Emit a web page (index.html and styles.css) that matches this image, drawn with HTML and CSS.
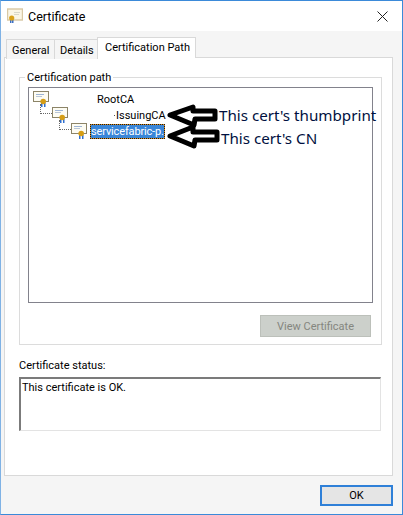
FILE: index.html
```html
<!DOCTYPE html>
<html lang="en">
<head>
  <meta charset="UTF-8">
  <title>Certificate</title>
  <link rel="stylesheet" href="styles.css">
</head>
<body>
  <div class="dialog">
    <div class="titlebar">
      <svg class="title-icon" width="16" height="16" viewBox="0 0 16 16">
        <rect x="0.5" y="1" width="15" height="11" fill="#fbf6e6" stroke="#d8c8a4" stroke-width="1.4"/>
        <rect x="7" y="4" width="6" height="1" fill="#d8d8cc"/>
        <rect x="7" y="6" width="5" height="1" fill="#d8d8cc"/>
        <path d="M3 12h1.5v3H3zM5 12h1.5v3H5z" fill="#3b6fc4"/>
        <circle cx="4.7" cy="10" r="2.6" fill="#d9a21b"/>
      </svg>
      <span class="title-text">Certificate</span>
      <svg class="close-icon" width="11" height="11" viewBox="0 0 11 11">
        <path d="M0.5 0.5L10.5 10.5M10.5 0.5L0.5 10.5" stroke="#222" fill="none"/>
      </svg>
    </div>

    <div class="content">
      <div class="tabs">
        <div class="tab">General</div>
        <div class="tab tab-details">Details</div>
        <div class="tab tab-active">Certification Path</div>
      </div>

      <div class="panel">
        <fieldset class="group">
          <legend>Certification path</legend>
          <div class="tree">
            <div class="node node-root">
              <svg class="cert"><use href="#cert"/></svg>
              <span class="node-label label-root">RootCA</span>
            </div>
            <div class="node node-issuing">
              <span class="elbow"></span>
              <svg class="cert"><use href="#cert"/></svg>
              <span class="tick"></span>
              <span class="node-label label-issuing">IssuingCA</span>
            </div>
            <div class="node node-leaf">
              <span class="elbow"></span>
              <svg class="cert"><use href="#cert"/></svg>
              <span class="node-label label-selected">servicefabric-p.</span>
            </div>
          </div>
          <div class="group-actions">
            <button type="button" class="btn-view" disabled>View Certificate</button>
          </div>
        </fieldset>

        <div class="status-label">Certificate status:</div>
        <div class="status-box">This certificate is OK.</div>
      </div>

      <div class="footer">
        <button type="button" class="btn-ok">OK</button>
      </div>
    </div>

    <!-- hand drawn arrows and notes pasted over the dialog -->
    <svg class="arrows" width="70" height="55" viewBox="0 0 70 55">
      <path d="M10 17L33 9L33 13L55 13L55 21L35 21L34 27Z" fill="#fff" stroke="#000" stroke-width="5" stroke-linejoin="round"/>
      <path d="M10 38L33 29L33 34L57 34L57 42L35 42L34 48Z" fill="#fff" stroke="#000" stroke-width="5" stroke-linejoin="round"/>
    </svg>
    <div class="note note-thumb">This cert's thumbprint</div>
    <div class="note note-cn">This cert's CN</div>
  </div>

  <svg width="0" height="0" class="defs">
    <symbol id="cert" viewBox="0 0 16 16">
      <rect x="0.5" y="0.5" width="15" height="10" fill="#fdfcf3" stroke="#8c8468"/>
      <rect x="3" y="3" width="8" height="1" fill="#9db4d6"/>
      <rect x="3" y="5" width="6" height="1" fill="#b9c6d8"/>
      <path d="M8 12h1.5v4H8zM11 12h1.5v4H11z" fill="#2f6fd0"/>
      <circle cx="10.2" cy="10.5" r="2.8" fill="#d69e16"/>
    </symbol>
  </svg>
</body>
</html>
```

FILE: styles.css
```css
* {
  box-sizing: border-box;
}

html, body {
  margin: 0;
  height: 100%;
}

body {
  font-family: Roboto, "Noto Sans", sans-serif;
  font-size: 11px;
  color: #000;
  background-color: #fff;
}

.defs {
  position: absolute;
}

.dialog {
  position: relative;
  width: 403px;
  height: 515px;
  display: flex;
  flex-direction: column;
  border: 1px solid #3b8ad9;
  border-left-color: #7fb2e5;
}

.titlebar {
  height: 30px;
  flex: none;
  display: flex;
  align-items: center;
  padding: 0 14px 0 6px;
  background-color: #fff;
}

.title-text {
  margin-left: 5px;
  flex: 1;
  font-size: 12.5px;
}

.content {
  flex: 1;
  display: flex;
  flex-direction: column;
  padding: 6px 9px 7px 3px;
  background-color: #f5f5f5;
}

.tabs {
  display: flex;
  align-items: flex-end;
  height: 21px;
  padding-left: 2px;
  margin-bottom: -1px;
}

.tab {
  height: 20px;
  padding: 3px 5px 0;
  line-height: 15px;
  white-space: nowrap;
  background-color: #f5f5f5;
  border: 1px solid #d9d9d9;
  border-bottom: none;
  margin-right: -1px;
  position: relative;
  top: 1px;
  width: 49px;
}

.tab-details {
  width: 44px;
}

.tab-active {
  width: 99px;
  height: 21px;
  padding: 2px 0 0 7px;
  background-color: #fff;
  top: 0;
  z-index: 1;
}

.panel {
  height: 419px;
  padding: 12px 10px 0 14px;
  background-color: #fff;
  border: 1px solid #d9d9d9;
}

.group {
  margin: 0;
  height: 275px;
  padding: 2px 8px 0 8px;
  border: 1px solid #dcdcdc;
}

.group legend {
  padding: 0 2px;
  margin-left: -3px;
  line-height: 15px;
}

.tree {
  position: relative;
  height: 216px;
  border: 1px solid #82828c;
  background-color: #fff;
}

.node {
  position: absolute;
  display: flex;
  align-items: center;
  height: 16px;
}

.node-root {
  left: 4px;
  top: 3px;
}

.node-issuing {
  left: 23px;
  top: 19px;
}

.node-leaf {
  left: 42px;
  top: 35px;
}

.cert {
  width: 16px;
  height: 16px;
  flex: none;
}

.elbow {
  position: absolute;
  left: -12px;
  top: -3px;
  width: 12px;
  height: 10px;
  border-left: 1px dotted #666;
  border-bottom: 1px dotted #666;
}

.node-label {
  line-height: 15px;
  white-space: nowrap;
}

.label-root {
  margin-left: 48px;
}

.tick {
  width: 1px;
  height: 1px;
  margin-left: 46px;
  background-color: #555;
}

.label-issuing {
  margin-left: 1px;
}

.label-selected {
  margin-left: 3px;
  width: 75px;
  height: 15px;
  line-height: 14px;
  letter-spacing: -0.15px;
  background-color: #3a86d8;
  color: #fff;
  border: 1px solid #d98a1a;
  outline: 1px dotted #1a1a1a;
  outline-offset: -1px;
}

.group-actions {
  display: flex;
  justify-content: flex-end;
  padding: 12px 2px 0 0;
}

.btn-view {
  width: 111px;
  height: 22px;
  padding: 0;
  font: inherit;
  color: #84867f;
  background-color: #ccd0cb;
  border: 1px solid #bcc0ba;
}

.status-label {
  margin-top: 13px;
  line-height: 16px;
}

.status-box {
  width: 362px;
  height: 54px;
  margin-top: 3px;
  padding: 1px 0 0 1px;
  line-height: 15px;
  border: 1px solid #e3e3e3;
  border-top: 2px solid #7b7b7b;
  border-left: 2px solid #7b7b7b;
}

.footer {
  display: flex;
  justify-content: flex-end;
  padding: 9px 0 0;
}

.btn-ok {
  width: 73px;
  height: 21px;
  padding: 0;
  font: inherit;
  background-color: #e5e5e5;
  border: 2px solid #2f80d8;
}

.arrows {
  position: absolute;
  left: 159px;
  top: 97px;
}

.note {
  position: absolute;
  font-family: "Noto Sans", sans-serif;
  font-size: 15.2px;
  line-height: 18px;
  color: #001040;
  white-space: nowrap;
}

.note-thumb {
  left: 218px;
  top: 105px;
}

.note-cn {
  left: 220px;
  top: 128px;
}
```
